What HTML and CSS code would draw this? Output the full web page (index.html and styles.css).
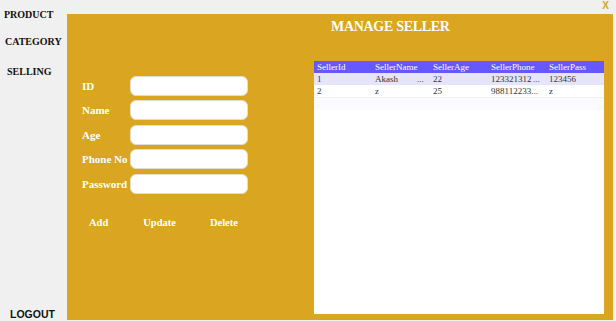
FILE: index.html
```html
<!DOCTYPE html>
<html lang="en">
<head>
    <meta charset="UTF-8">
    <title>Manage Seller</title>
    <link rel="stylesheet" href="styles.css">
</head>
<body>

    <div class="app">
        <!-- Side Menu -->
        <div class="side-menu">
            <div class="menu-item product">PRODUCT</div>
            <div class="menu-item category">CATEGORY</div>
            <div class="menu-item selling">SELLING</div>
            <div class="logout">LOGOUT</div>
        </div>

        <!-- Main Area -->
        <div class="main">
            <div class="top-bar">
                <span class="close">X</span>
            </div>
            <div class="panel">
                <!-- Seller Form -->
                <div class="form-side">
                    <div class="field-row">
                        <label>ID</label>
                        <input type="text">
                    </div>
                    <div class="field-row">
                        <label>Name</label>
                        <input type="text">
                    </div>
                    <div class="field-row">
                        <label>Age</label>
                        <input type="text">
                    </div>
                    <div class="field-row">
                        <label>Phone No</label>
                        <input type="text">
                    </div>
                    <div class="field-row">
                        <label>Password</label>
                        <input type="text">
                    </div>
                    <div class="button-row">
                        <button>Add</button>
                        <button>Update</button>
                        <button>Delete</button>
                    </div>
                </div>

                <!-- Seller Grid -->
                <div class="grid-side">
                    <div class="title">MANAGE SELLER</div>
                    <div class="seller-grid">
                        <table>
                            <tr class="head">
                                <td>SellerId</td>
                                <td>SellerName</td>
                                <td>SellerAge</td>
                                <td>SellerPhone</td>
                                <td>SellerPass</td>
                            </tr>
                            <tr class="selected">
                                <td>1</td>
                                <td><span class="cut">Akash</span><span class="dots">...</span></td>
                                <td>22</td>
                                <td><span class="cut">123321312</span><span class="dots">...</span></td>
                                <td>123456</td>
                            </tr>
                            <tr>
                                <td>2</td>
                                <td>z</td>
                                <td>25</td>
                                <td>988112233...</td>
                                <td>z</td>
                            </tr>
                            <tr class="new-row">
                                <td></td><td></td><td></td><td></td><td></td>
                            </tr>
                        </table>
                    </div>
                </div>
            </div>
        </div>
    </div>

</body>
</html>
```

FILE: styles.css
```css
/* Reset and basic styles */
html, body {
    padding: 0;
    margin: 0;
    background: #f0f0f0;
    font-family: "Liberation Serif", "Times New Roman", serif;
}

.app {
    display: flex;
    width: 616px;
    height: 321px;
    overflow: hidden;
}

/* Side Menu */
.side-menu {
    width: 67px;
    display: flex;
    flex-direction: column;
}

.menu-item {
    font-weight: bold;
    font-size: 10px;
    line-height: 12px;
    color: #111;
}

.product {
    margin: 9px 0 0 4px;
}

.category {
    margin: 15px 0 0 5px;
}

.selling {
    margin: 18px 0 0 7px;
}

.logout {
    margin-top: auto;
    margin-left: 10px;
    margin-bottom: 0;
    font-family: "Liberation Sans", Arial, sans-serif;
    font-weight: bold;
    font-size: 10.5px;
    line-height: 13px;
    color: #111;
}

/* Main Area */
.main {
    width: 546px;
    display: flex;
    flex-direction: column;
}

.top-bar {
    height: 14px;
    display: flex;
    justify-content: flex-end;
}

.close {
    font-family: "Liberation Sans", Arial, sans-serif;
    font-weight: bold;
    font-size: 10px;
    line-height: 12px;
    color: #daa520;
    margin-right: 4px;
}

.panel {
    flex: 1;
    background: #daa520;
    display: flex;
    margin-bottom: 1px;
}

/* Seller Form */
.form-side {
    width: 232px;
    padding: 62px 0 0 15px;
}

.field-row {
    display: flex;
    align-items: center;
    height: 20px;
    margin-bottom: 4.4px;
}

.field-row label {
    width: 48px;
    color: white;
    font-weight: bold;
    font-size: 11px;
}

.field-row input {
    width: 118px;
    height: 20px;
    box-sizing: border-box;
    border: 1px solid #e2dccb;
    border-radius: 6px;
    background: white;
    padding: 0;
}

.button-row {
    display: flex;
    margin-top: 23px;
}

.button-row button {
    background: none;
    border: none;
    padding: 0;
    color: white;
    font-family: "Liberation Serif", "Times New Roman", serif;
    font-weight: bold;
    font-size: 10.5px;
    line-height: 12px;
}

.button-row button:nth-child(1) {
    margin-left: 7px;
}

.button-row button:nth-child(2) {
    margin-left: 35px;
}

.button-row button:nth-child(3) {
    margin-left: 34px;
}

/* Seller Grid */
.grid-side {
    width: 290px;
    display: flex;
    flex-direction: column;
    padding-bottom: 6px;
}

.title {
    color: white;
    font-weight: bold;
    font-size: 14px;
    letter-spacing: -0.3px;
    line-height: 16px;
    margin: 5px 0 0 17px;
}

.seller-grid {
    flex: 1;
    margin-top: 26px;
    background: white;
}

.seller-grid table {
    width: 100%;
    border-collapse: collapse;
    table-layout: fixed;
    font-size: 9px;
    color: #333;
}

.seller-grid td {
    height: 12px;
    padding: 0 0 0 3px;
    white-space: nowrap;
    overflow: hidden;
}

.seller-grid tr.head td {
    background: #6458fe;
    color: white;
}

.seller-grid tr.selected td {
    background: #e6e4fb;
}

.seller-grid tr.new-row td {
    background: #fafaff;
    border-top: 1px solid #f0f0fa;
}

.cut {
    display: inline-block;
    width: 42px;
}

.dots {
    display: inline-block;
}
```
